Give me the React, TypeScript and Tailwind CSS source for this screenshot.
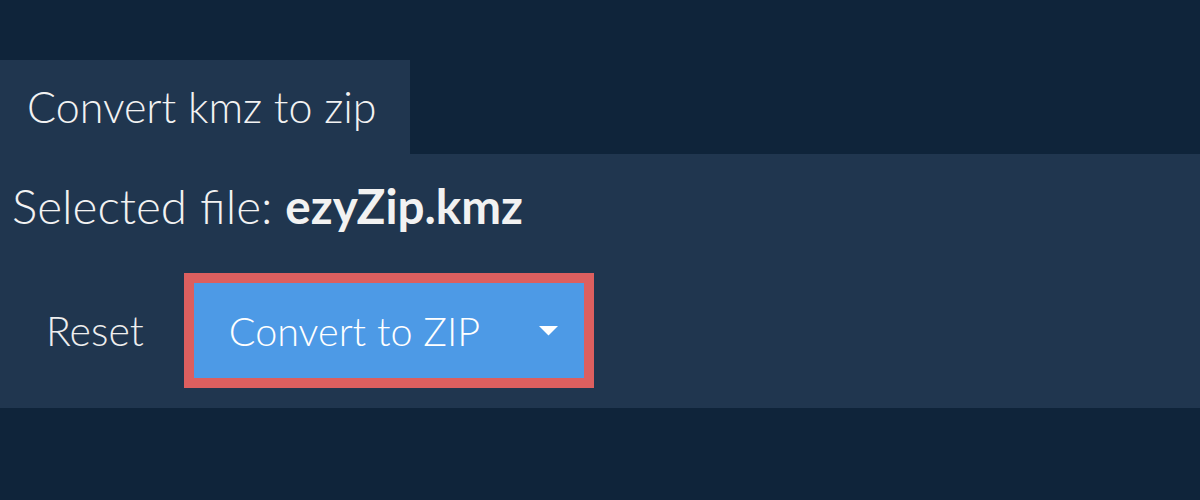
export default function App() {
  return (
    <div className="min-h-[500px] bg-[#0f243a] pt-[60px] font-['Lato',sans-serif] text-[#f2f2f2]">
      <div className="w-[410px] h-[94px] bg-[#20364f] flex items-center pl-[27px] text-[43px] font-light">
        Convert kmz to zip
      </div>
      <div className="h-[254px] bg-[#20364f] px-[12px] pt-[22px]">
        <div className="text-[47.6px] font-light leading-[60px]">
          Selected file: <span className="font-bold">ezyZip.kmz</span>
        </div>
        <div className="flex items-center mt-[37px]">
          <button className="pl-[34px] mr-[40px] text-[41px] font-light text-[#eeeeee]">Reset</button>
          <div className="border-[10px] border-[#dc5f5f]">
            <button className="w-[390px] h-[95px] bg-[#4d9ae6] flex items-center pl-[35px] pr-[26px] text-[39.6px] font-light text-white">
              <span className="flex-1 text-left">Convert to ZIP</span>
              <svg width="19" height="10" viewBox="0 0 19 10">
                <path d="M0 0 L19 0 L9.5 9.5 Z" fill="#ffffff" />
              </svg>
            </button>
          </div>
        </div>
      </div>
    </div>
  )
}
